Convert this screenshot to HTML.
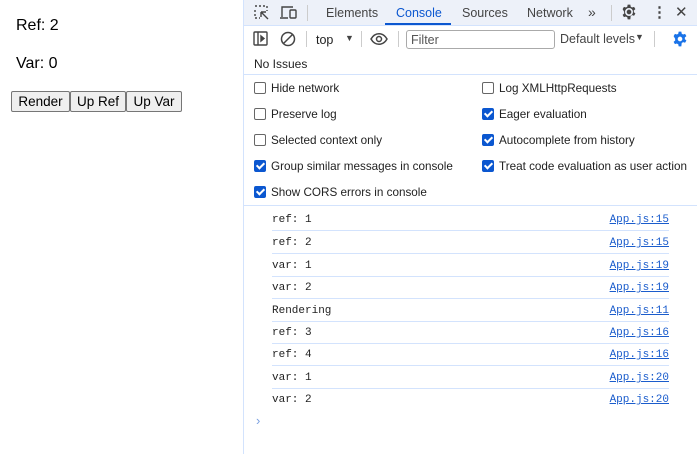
<!DOCTYPE html>
<html><head><style>
body{margin:0;width:697px;height:454px;position:relative;font-family:"Liberation Sans",Arial,sans-serif;background:#fff;overflow:hidden}
.a{position:absolute}
.l{font-size:16px;color:#000}
button{position:absolute;top:91px;height:21px;font:13.5px "Liberation Sans",sans-serif;background:#efefef;border:1px solid #767676;border-radius:2px;padding:0 5px;color:#000}
#dt{position:absolute;left:243px;top:0;width:454px;height:454px;border-left:1px solid #d3e3fd;font-size:12px;color:#1f1f1f}
.tabs{position:absolute;left:0;top:0;width:454px;height:25px;background:#edf1f9;border-bottom:1px solid #d3e3fd}
.t{position:absolute;top:6px;font-size:12.5px;color:#444}
.cb{position:absolute;width:10px;height:10px;border:1px solid #666;border-radius:2px}
.cb.on{background:#0b57d0;border-color:#0b57d0}
.cb.on:after{content:"";position:absolute;left:3px;top:0px;width:3px;height:6px;border:solid #fff;border-width:0 2px 2px 0;transform:rotate(45deg)}
.ct{position:absolute;font-size:11.7px;color:#1f1f1f}
.row{position:absolute;left:28px;width:397px;height:22px;border-bottom:1px solid #d3e3fd;font:11px "Liberation Mono",monospace;color:#1f1f1f}
.row span{position:absolute;top:6px}
.row a{position:absolute;right:0;top:6px;color:#1a5ccc;text-decoration:underline}
</style></head><body>
<div class="a l" style="left:16px;top:17px">Ref: 2</div>
<div class="a l" style="left:16px;top:55px">Var: 0</div>
<button style="left:11px;width:59px">Render</button>
<button style="left:70px;width:56px">Up Ref</button>
<button style="left:126px;width:56px">Up Var</button>
<div id="dt">
<div class="tabs">
<svg class="a" style="left:10px;top:5px" width="16" height="16" viewBox="0 0 16 16" fill="none" stroke="#444" stroke-width="1.4"><path d="M1 1h2M5 1h2M9 1h2M1 5v2M1 9v2M1 13h2M5 13h1M13 1v2M13 5v1" /><path d="M7 7l7 7M7 7h5M7 7v5"/></svg>
<svg class="a" style="left:36px;top:5px" width="18" height="16" viewBox="0 0 18 16" fill="none" stroke="#444" stroke-width="1.4"><path d="M2 12V2h11M0 13h8"/><rect x="10" y="5" width="6" height="8" rx="1"/></svg>
<div class="a" style="left:63px;top:5px;width:1px;height:16px;background:#ccc"></div>
<div class="t" style="left:82px">Elements</div>
<div class="t" style="left:152px;color:#0b57d0">Console</div>
<div class="a" style="left:141px;top:23px;width:66px;height:2px;background:#0b57d0"></div>
<div class="t" style="left:218px">Sources</div>
<div class="t" style="left:283px">Network</div>
<div class="t" style="left:344px;font-size:14px;top:4px">&#187;</div>
<div class="a" style="left:367px;top:5px;width:1px;height:16px;background:#ccc"></div>
<svg class="a" style="left:377px;top:4px" width="16" height="16" viewBox="0 0 24 24"><path fill="#444" fill-rule="evenodd" d="M10 1h4l.6 3.1a8 8 0 0 1 2 1.2l3-1 2 3.4-2.4 2.1a8 8 0 0 1 0 2.4l2.4 2.1-2 3.4-3-1a8 8 0 0 1-2 1.2L14 23h-4l-.6-3.1a8 8 0 0 1-2-1.2l-3 1-2-3.4 2.4-2.1a8 8 0 0 1 0-2.4L2.4 7.7l2-3.4 3 1a8 8 0 0 1 2-1.2zM12 8.5a3.5 3.5 0 1 0 0 7 3.5 3.5 0 0 0 0-7zM12 6a6 6 0 1 0 0 12a6 6 0 0 0 0-12z"/></svg>
<div class="a" style="left:408px;top:3px;font-size:15px;color:#444;font-weight:bold">&#8942;</div>
<div class="a" style="left:431px;top:3px;font-size:15px;color:#444">&#10005;</div>
</div>
<svg class="a" style="left:9px;top:31px" width="16" height="16" viewBox="0 0 16 16" fill="none" stroke="#444" stroke-width="1.4"><rect x="1" y="1" width="13" height="13" rx="1"/><path d="M5 1v13"/><path d="M8 5l3 2.5L8 10z" fill="#444"/></svg>
<svg class="a" style="left:36px;top:31px" width="16" height="16" viewBox="0 0 16 16" fill="none" stroke="#444" stroke-width="1.5"><circle cx="8" cy="8" r="6.5"/><path d="M3.5 12.5l9-9"/></svg>
<div class="a" style="left:62px;top:31px;width:1px;height:16px;background:#ccc"></div>
<div class="a" style="left:72px;top:33px;font-size:12.5px">top</div>
<div class="a" style="left:101px;top:33px;font-size:9px;color:#444">&#9660;</div>
<div class="a" style="left:117px;top:31px;width:1px;height:16px;background:#ccc"></div>
<svg class="a" style="left:126px;top:32px" width="18" height="14" viewBox="0 0 18 14" fill="none" stroke="#444" stroke-width="1.5"><path d="M1 7c4-7 12-7 16 0c-4 7-12 7-16 0z"/><circle cx="9" cy="7" r="2.5"/></svg>
<div class="a" style="left:154px;top:31px;width:1px;height:16px;background:#ccc"></div>
<div class="a" style="left:162px;top:30px;width:143px;height:17px;border:1px solid #aaa;border-radius:3px;font-size:12.5px;color:#555;line-height:18px;padding-left:4px">Filter</div>
<div class="a" style="left:316px;top:32px;font-size:12.5px;color:#444">Default levels</div>
<div class="a" style="left:391px;top:32px;font-size:9px;color:#444">&#9660;</div>
<div class="a" style="left:410px;top:31px;width:1px;height:16px;background:#ccc"></div>
<svg class="a" style="left:428px;top:31px" width="16" height="16" viewBox="0 0 24 24"><path fill="#1a73e8" fill-rule="evenodd" d="M10 1h4l.6 3.1a8 8 0 0 1 2 1.2l3-1 2 3.4-2.4 2.1a8 8 0 0 1 0 2.4l2.4 2.1-2 3.4-3-1a8 8 0 0 1-2 1.2L14 23h-4l-.6-3.1a8 8 0 0 1-2-1.2l-3 1-2-3.4 2.4-2.1a8 8 0 0 1 0-2.4L2.4 7.7l2-3.4 3 1a8 8 0 0 1 2-1.2zM12 8.5a3.5 3.5 0 1 0 0 7 3.5 3.5 0 0 0 0-7z"/></svg>
<div class="a" style="left:10px;top:57px;font-size:12px">No Issues</div>
<div class="a" style="left:0;top:74px;width:454px;height:1px;background:#d3e3fd"></div>
<div class="cb" style="left:10px;top:82px"></div><div class="ct" style="left:27px;top:82px">Hide network</div>
<div class="cb" style="left:10px;top:108px"></div><div class="ct" style="left:27px;top:108px">Preserve log</div>
<div class="cb" style="left:10px;top:134px"></div><div class="ct" style="left:27px;top:134px">Selected context only</div>
<div class="cb on" style="left:10px;top:160px"></div><div class="ct" style="left:27px;top:160px">Group similar messages in console</div>
<div class="cb on" style="left:10px;top:186px"></div><div class="ct" style="left:27px;top:186px">Show CORS errors in console</div>
<div class="cb" style="left:238px;top:82px"></div><div class="ct" style="left:255px;top:82px">Log XMLHttpRequests</div>
<div class="cb on" style="left:238px;top:108px"></div><div class="ct" style="left:255px;top:108px">Eager evaluation</div>
<div class="cb on" style="left:238px;top:134px"></div><div class="ct" style="left:255px;top:134px">Autocomplete from history</div>
<div class="cb on" style="left:238px;top:160px"></div><div class="ct" style="left:255px;top:160px">Treat code evaluation as user action</div>
<div class="a" style="left:0;top:205px;width:454px;height:1px;background:#d3e3fd"></div>
<div class="row" style="top:208px"><span>ref: 1</span><a>App.js:15</a></div>
<div class="row" style="top:231px"><span>ref: 2</span><a>App.js:15</a></div>
<div class="row" style="top:254px"><span>var: 1</span><a>App.js:19</a></div>
<div class="row" style="top:276px"><span>var: 2</span><a>App.js:19</a></div>
<div class="row" style="top:299px"><span>Rendering</span><a>App.js:11</a></div>
<div class="row" style="top:321px"><span>ref: 3</span><a>App.js:16</a></div>
<div class="row" style="top:343px"><span>ref: 4</span><a>App.js:16</a></div>
<div class="row" style="top:366px"><span>var: 1</span><a>App.js:20</a></div>
<div class="row" style="top:388px;border:none"><span>var: 2</span><a>App.js:20</a></div>
<div class="a" style="left:12px;top:413px;font-size:13px;color:#7aa0e0">&#8250;</div>
</div>
</body></html>
